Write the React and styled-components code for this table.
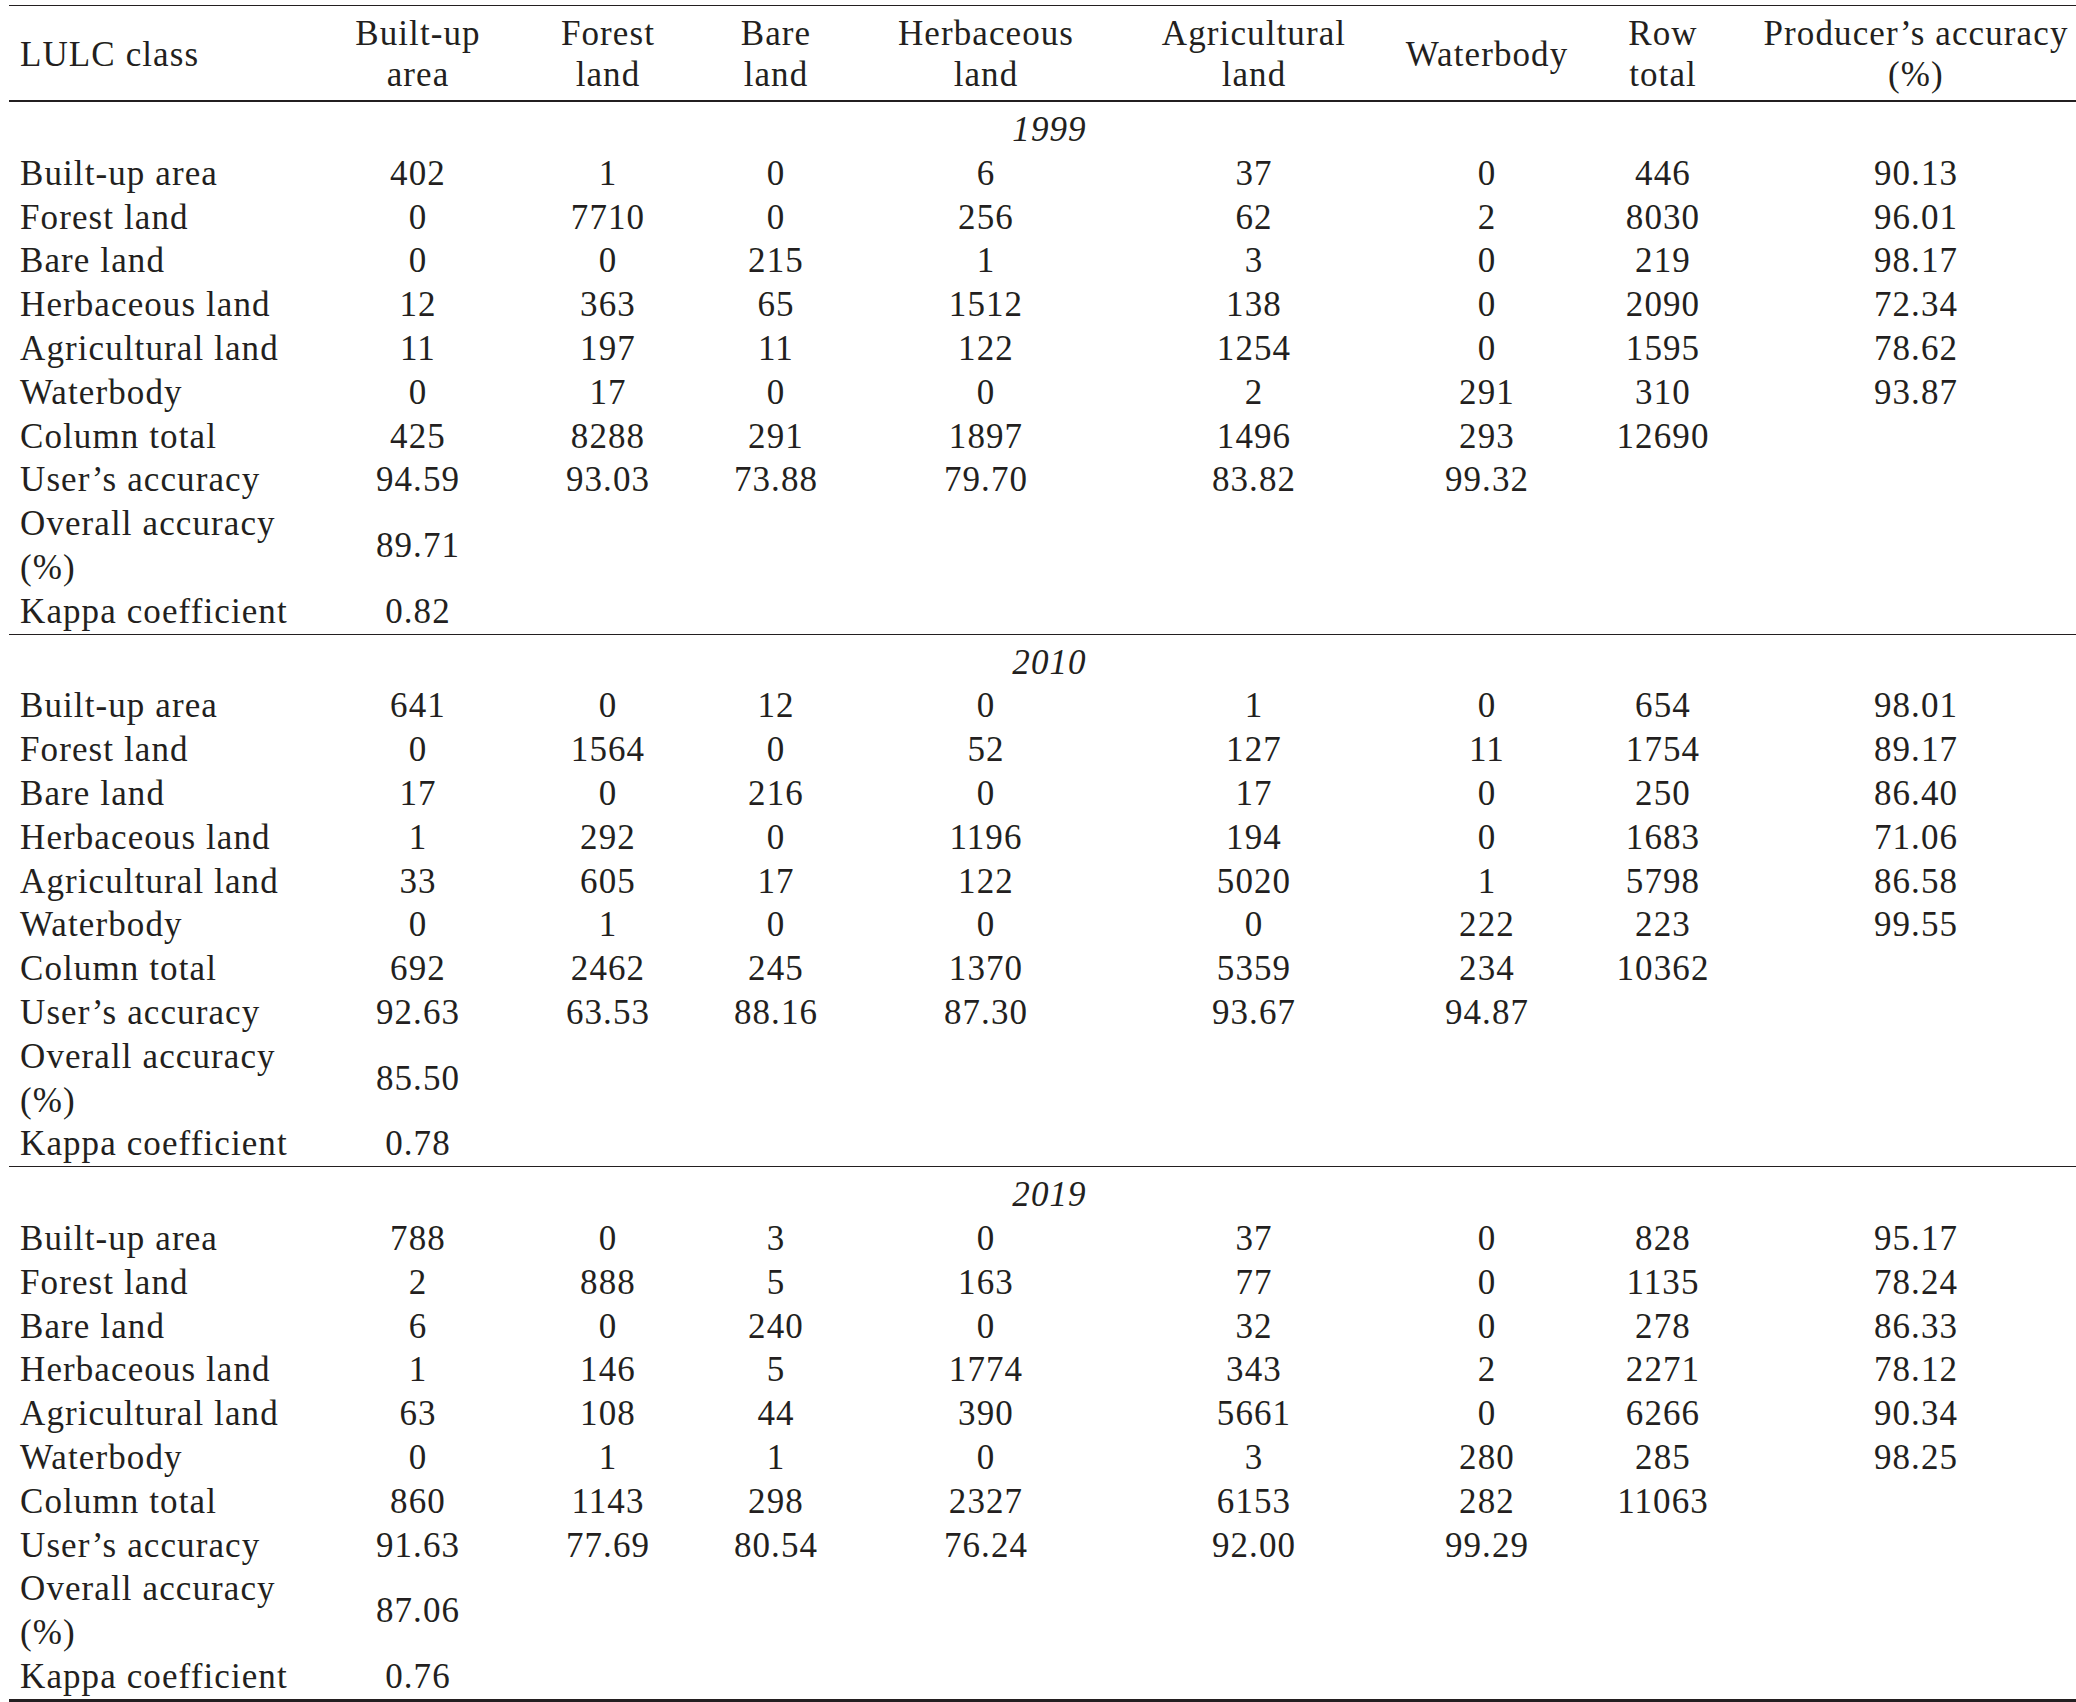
import React from 'react'
import styled, { createGlobalStyle } from 'styled-components'

const GlobalStyle = createGlobalStyle`
    html, body {
        margin: 0;
        padding: 0;
        background: #ffffff;
        overflow: hidden;
    }
`

const COLS = '321px 176px 204px 132px 288px 248px 218px 134px 372px'

const headers = [
    ['Built-up', 'area'],
    ['Forest', 'land'],
    ['Bare', 'land'],
    ['Herbaceous', 'land'],
    ['Agricultural', 'land'],
    ['Waterbody'],
    ['Row', 'total'],
    ['Producer’s accuracy', '(%)'],
]

const sections = [
    {
        year: '1999',
        rows: [
            ['Built-up area', '402', '1', '0', '6', '37', '0', '446', '90.13'],
            ['Forest land', '0', '7710', '0', '256', '62', '2', '8030', '96.01'],
            ['Bare land', '0', '0', '215', '1', '3', '0', '219', '98.17'],
            ['Herbaceous land', '12', '363', '65', '1512', '138', '0', '2090', '72.34'],
            ['Agricultural land', '11', '197', '11', '122', '1254', '0', '1595', '78.62'],
            ['Waterbody', '0', '17', '0', '0', '2', '291', '310', '93.87'],
            ['Column total', '425', '8288', '291', '1897', '1496', '293', '12690', ''],
            ['User’s accuracy', '94.59', '93.03', '73.88', '79.70', '83.82', '99.32', '', ''],
        ],
        overall: '89.71',
        kappa: '0.82',
    },
    {
        year: '2010',
        rows: [
            ['Built-up area', '641', '0', '12', '0', '1', '0', '654', '98.01'],
            ['Forest land', '0', '1564', '0', '52', '127', '11', '1754', '89.17'],
            ['Bare land', '17', '0', '216', '0', '17', '0', '250', '86.40'],
            ['Herbaceous land', '1', '292', '0', '1196', '194', '0', '1683', '71.06'],
            ['Agricultural land', '33', '605', '17', '122', '5020', '1', '5798', '86.58'],
            ['Waterbody', '0', '1', '0', '0', '0', '222', '223', '99.55'],
            ['Column total', '692', '2462', '245', '1370', '5359', '234', '10362', ''],
            ['User’s accuracy', '92.63', '63.53', '88.16', '87.30', '93.67', '94.87', '', ''],
        ],
        overall: '85.50',
        kappa: '0.78',
    },
    {
        year: '2019',
        rows: [
            ['Built-up area', '788', '0', '3', '0', '37', '0', '828', '95.17'],
            ['Forest land', '2', '888', '5', '163', '77', '0', '1135', '78.24'],
            ['Bare land', '6', '0', '240', '0', '32', '0', '278', '86.33'],
            ['Herbaceous land', '1', '146', '5', '1774', '343', '2', '2271', '78.12'],
            ['Agricultural land', '63', '108', '44', '390', '5661', '0', '6266', '90.34'],
            ['Waterbody', '0', '1', '1', '0', '3', '280', '285', '98.25'],
            ['Column total', '860', '1143', '298', '2327', '6153', '282', '11063', ''],
            ['User’s accuracy', '91.63', '77.69', '80.54', '76.24', '92.00', '99.29', '', ''],
        ],
        overall: '87.06',
        kappa: '0.76',
    },
]

function App() {
    return (
        <>
            <GlobalStyle />
            <Table>
                <HeaderRow>
                    <HeadLabel>LULC class</HeadLabel>
                    {headers.map(lines => (
                        <HeadCell key={lines.join(' ')}>
                            {lines.map(line => <span key={line}>{line}</span>)}
                        </HeadCell>
                    ))}
                </HeaderRow>
                {sections.map((section, sIndex) => (
                    <Section key={section.year} last={sIndex === sections.length - 1}>
                        <YearRow>{section.year}</YearRow>
                        {section.rows.map(row => (
                            <Row key={row[0]}>
                                <Label>{row[0]}</Label>
                                {row.slice(1).map((value, vIndex) => (
                                    <Cell key={vIndex}>{value}</Cell>
                                ))}
                            </Row>
                        ))}
                        <Row>
                            <Label>Overall accuracy<br />(%)</Label>
                            <Cell>{section.overall}</Cell>
                        </Row>
                        <Row>
                            <Label>Kappa coefficient</Label>
                            <Cell>{section.kappa}</Cell>
                        </Row>
                    </Section>
                ))}
            </Table>
        </>
    )
}

const Table = styled.div`
    margin: 5px 0 0 9px;
    width: 2093px;
    border-top: 1.5px solid #231f20;
    font-family: "Liberation Serif", "Times New Roman", serif;
    font-size: 35px;
    letter-spacing: 1.1px;
    color: #231f20;
`

const HeaderRow = styled.div`
    display: grid;
    grid-template-columns: ${COLS};
    padding: 7px 0 5px;
    border-bottom: 2.5px solid #231f20;
    line-height: 41px;
`

const HeadLabel = styled.div`
    display: flex;
    align-items: center;
    padding-left: 11px;
`

const HeadCell = styled.div`
    display: flex;
    flex-direction: column;
    align-items: center;
    justify-content: center;
    text-align: center;
    white-space: nowrap;
`

const Section = styled.div`
    padding-top: 6px;
    border-bottom: ${props => props.last ? '3px' : '1.2px'} solid #231f20;
`

const YearRow = styled.div`
    line-height: 43.8px;
    text-align: center;
    font-style: italic;
    padding-right: 12px;
`

const Row = styled.div`
    display: grid;
    grid-template-columns: ${COLS};
    line-height: 43.8px;
`

const Label = styled.div`
    padding-left: 11px;
    white-space: nowrap;
`

const Cell = styled.div`
    display: flex;
    align-items: center;
    justify-content: center;
    white-space: nowrap;
`

export default App
